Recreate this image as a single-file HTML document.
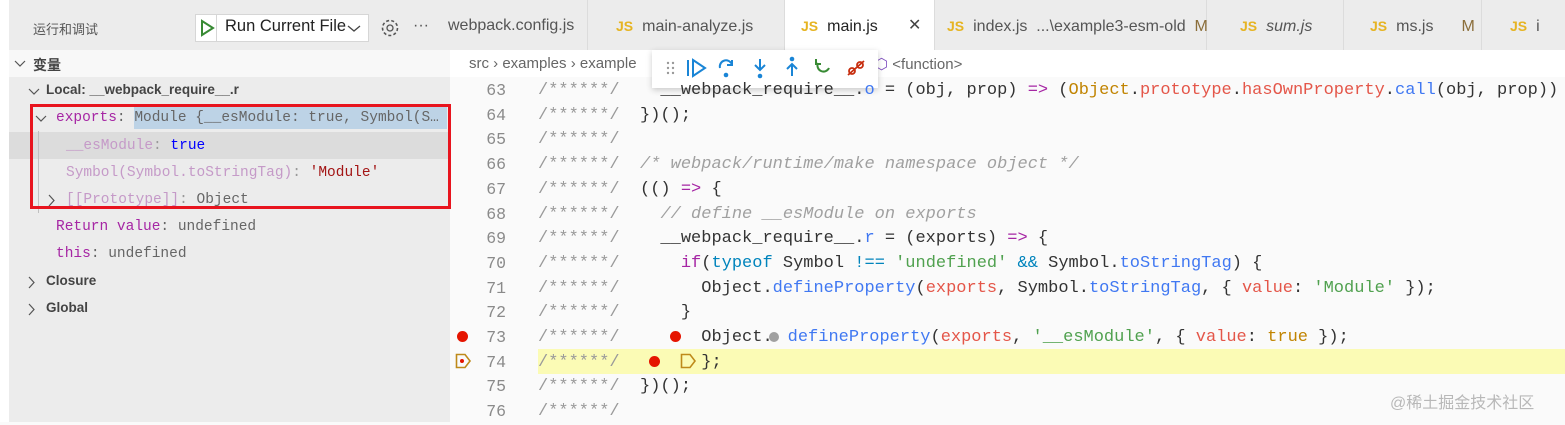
<!DOCTYPE html>
<html><head><meta charset="utf-8"><style>
*{margin:0;padding:0;box-sizing:border-box}
body{width:1565px;height:422px;overflow:hidden;background:#fafafa;position:relative;font-family:"Segoe UI","Liberation Sans","Noto Sans CJK SC",sans-serif;}
.abs{position:absolute}
.mono{font-family:"Liberation Mono","DejaVu Sans Mono",monospace;white-space:pre}
#left{left:9px;top:0;width:441px;height:422px;background:#ececec}
#strip{left:0;top:0;width:9px;height:422px;background:#fff}
.tabs{left:447px;top:0;width:1118px;height:50px;background:#ececec;overflow:hidden}
.tab{position:absolute;top:0;height:50px;border-right:1px solid #dcdcdc;font-size:16px;color:#555;line-height:52px;white-space:nowrap}
.js{color:#e6b422;font-weight:bold;font-size:14px;margin-right:9px}
.ln{position:absolute;left:450px;width:56px;text-align:right;color:#8a8a8a;font-family:"Liberation Mono",monospace;font-size:16.5px}
.cl{position:absolute;left:538px;font-size:17px;color:#333}
.c{color:#9a9a9a}.cm{color:#a0a0a0;font-style:italic}.p{color:#a626a4}.b{color:#4078f2}.r{color:#e45649}.o{color:#c18401}.g{color:#50a14f}.k{color:#0184bc}
.dot{position:absolute;width:11px;height:11px;border-radius:50%;background:#e51400}
</style></head><body>
<div id="strip" class="abs"></div>
<div id="left" class="abs"></div>
<div class="abs" style="left:9px;top:50px;width:441px;height:27px;background:#f8f8f8"></div>
<div class="abs" style="left:33px;top:19px;font-size:13px;color:#555">运行和调试</div>
<div class="abs" style="left:195px;top:14px;width:174px;height:28px;background:#fff;border:1px solid #d6d6d6"></div>
<div class="abs" style="left:216px;top:14px;width:1px;height:28px;background:#d6d6d6"></div>
<svg class="abs" style="left:199px;top:19px" width="16" height="18"><path d="M3 2 L14 9 L3 16 Z" fill="none" stroke="#388a34" stroke-width="2"/></svg>
<div class="abs" style="left:225px;top:17px;font-size:16.5px;color:#222">Run Current File</div>
<svg class="abs" style="left:347px;top:24px" width="14" height="9"><path d="M1 2 L7 7 L13 2" fill="none" stroke="#444" stroke-width="1.3"/></svg>
<svg class="abs" style="left:379px;top:17px" width="22" height="22"><circle cx="11" cy="11" r="3" fill="none" stroke="#555" stroke-width="1.3"/><circle cx="11" cy="11" r="7.5" fill="none" stroke="#555" stroke-width="1.6" stroke-dasharray="3 2.2"/></svg>
<div class="abs" style="left:413px;top:17px;font-size:16px;color:#555">···</div>

<div class="tabs abs">
<div class="tab" style="left:-48px;width:189px;padding-left:49px">webpack.config.js</div>
<div class="tab" style="left:141px;width:197px;padding-left:28px"><span class="js">JS</span>main-analyze.js</div>
<div class="tab" style="left:338px;width:150px;padding-left:16px;background:#fff;color:#222"><span class="js">JS</span>main.js<span style="position:absolute;left:123px;color:#444">✕</span></div>
<div class="tab" style="left:488px;width:272px;padding-left:12px"><span class="js">JS</span>index.js&nbsp; ...\example3-esm-old&nbsp; <span style="color:#8b6e3a">M</span></div>
<div class="tab" style="left:760px;width:137px;padding-left:33px"><span class="js">JS</span><i>sum.js</i></div>
<div class="tab" style="left:897px;width:138px;padding-left:26px"><span class="js">JS</span>ms.js<span style="color:#8b6e3a;margin-left:28px">M</span></div>
<div class="tab" style="left:1035px;width:100px;padding-left:28px;border:none"><span class="js">JS</span>i</div>
</div>

<!-- breadcrumb -->
<div class="abs" style="left:450px;top:50px;width:1115px;height:27px;background:#fff"></div>
<div class="abs" style="left:469px;top:55px;font-size:15px;color:#666">src › examples › example</div>
<div class="abs" style="left:875px;top:55px;font-size:15px;color:#666"><span style="color:#7f4fbf">⬡</span> &lt;function&gt;</div>
<div class="abs" style="left:652px;top:50px;width:226px;height:38px;background:#fff;box-shadow:0 2px 6px rgba(0,0,0,.2)"></div>
<svg class="abs" style="left:652px;top:50px" width="226" height="38">
<g fill="#999"><circle cx="16" cy="13" r="1.2"/><circle cx="21" cy="13" r="1.2"/><circle cx="16" cy="18" r="1.2"/><circle cx="21" cy="18" r="1.2"/><circle cx="16" cy="23" r="1.2"/><circle cx="21" cy="23" r="1.2"/></g>
<g stroke="#1a85d6" stroke-width="2" fill="none"><path d="M36 10 V26"/><path d="M41 10 L53 18 L41 26 Z"/>
<path d="M68 18 A6 6 0 0 1 80 15"/><path d="M80 10 V15 H75"/>
<path d="M108 9 V20 M103 15 L108 20 L113 15"/>
<path d="M140 26 V15 M135 19 L140 14 L145 19"/></g>
<g fill="#1a85d6"><circle cx="74" cy="25" r="2.3"/><circle cx="108" cy="26" r="2.3"/><circle cx="140" cy="9" r="2.3"/></g>
<path d="M166 13 A6 6 0 1 0 177 18" stroke="#388a34" stroke-width="2" fill="none"/><path d="M164 9 V14 H169" stroke="#388a34" stroke-width="2" fill="none"/>
<g stroke="#c72e0f" stroke-width="1.8" fill="none"><path d="M196 25 L212 11"/><circle cx="200" cy="21" r="3"/><circle cx="208" cy="15" r="3"/></g>
</svg>

<!-- left panel -->
<svg class="abs" style="left:14px;top:59px" width="12" height="10"><path d="M1 2 L6 7 L11 2" fill="none" stroke="#555" stroke-width="1.2"/></svg>
<div class="abs" style="left:33px;top:55px;font-size:14px;font-weight:bold;color:#444">变量</div>
<svg class="abs" style="left:28px;top:87px" width="12" height="10"><path d="M1 2 L6 7 L11 2" fill="none" stroke="#555" stroke-width="1.2"/></svg>
<div class="abs" style="left:46px;top:82px;font-size:13.5px;font-weight:bold;color:#444">Local: __webpack_require__.r</div>
<div class="abs" style="left:9px;top:132px;width:441px;height:27px;background:#dcdcdc"></div>
<div class="abs" style="left:134px;top:107px;width:313px;height:22px;background:#bdd3e6"></div>
<div class="abs" style="left:38px;top:131px;width:1px;height:82px;background:#c0c0c0"></div>
<svg class="abs" style="left:35px;top:114px" width="12" height="10"><path d="M1 2 L6 7 L11 2" fill="none" stroke="#555" stroke-width="1.2"/></svg>
<div class="abs mono" style="left:56px;top:110px;font-size:14.5px"><span class="p">exports</span><span style="color:#666">: Module {__esModule: true, Symbol(S…</span></div>
<div class="abs mono" style="left:66px;top:138px;font-size:14.5px"><span style="color:#c59ac8">__esModule</span><span style="color:#999">: </span><span style="color:#0000ff">true</span></div>
<div class="abs mono" style="left:66px;top:165px;font-size:14.5px"><span style="color:#c59ac8">Symbol(Symbol.toStringTag)</span><span style="color:#999">: </span><span style="color:#a31515">'Module'</span></div>
<svg class="abs" style="left:47px;top:194px" width="10" height="13"><path d="M2 1 L7 6.5 L2 12" fill="none" stroke="#555" stroke-width="1.2"/></svg>
<div class="abs mono" style="left:66px;top:192px;font-size:14.5px"><span style="color:#c59ac8">[[Prototype]]</span><span style="color:#999">: </span><span style="color:#666">Object</span></div>
<div class="abs" style="left:30px;top:104px;width:421px;height:105px;border:3px solid #e8141e"></div>
<div class="abs mono" style="left:56px;top:219px;font-size:14.5px"><span class="p">Return value</span><span style="color:#666">: undefined</span></div>
<div class="abs mono" style="left:56px;top:246px;font-size:14.5px"><span class="p">this</span><span style="color:#666">: undefined</span></div>
<svg class="abs" style="left:27px;top:276px" width="10" height="13"><path d="M2 1 L7 6.5 L2 12" fill="none" stroke="#555" stroke-width="1.2"/></svg>
<div class="abs" style="left:46px;top:273px;font-size:13.5px;font-weight:bold;color:#444">Closure</div>
<svg class="abs" style="left:27px;top:303px" width="10" height="13"><path d="M2 1 L7 6.5 L2 12" fill="none" stroke="#555" stroke-width="1.2"/></svg>
<div class="abs" style="left:46px;top:300px;font-size:13.5px;font-weight:bold;color:#444">Global</div>

<!-- code -->
<div class="abs" style="left:538px;top:349px;width:1027px;height:25px;background:#fbfbb5"></div>
<div class="abs mono" style="left:0;top:2px;line-height:24.7px">
<div class="ln" style="top:77px">63</div><div class="cl mono" style="top:77px"><span class="c">/******/</span>    __webpack_require__.<span class="b">o</span> = (obj, prop) <span class="p">=&gt;</span> (<span class="o">Object</span>.<span class="r">prototype</span>.<span class="r">hasOwnProperty</span>.<span class="b">call</span>(obj, prop))</div>
<div class="ln" style="top:101.7px">64</div><div class="cl mono" style="top:101.7px"><span class="c">/******/</span>  })();</div>
<div class="ln" style="top:126.4px">65</div><div class="cl mono" style="top:126.4px"><span class="c">/******/</span></div>
<div class="ln" style="top:151.1px">66</div><div class="cl mono" style="top:151.1px"><span class="c">/******/</span>  <span class="cm">/* webpack/runtime/make namespace object */</span></div>
<div class="ln" style="top:175.8px">67</div><div class="cl mono" style="top:175.8px"><span class="c">/******/</span>  (() <span class="p">=&gt;</span> {</div>
<div class="ln" style="top:200.5px">68</div><div class="cl mono" style="top:200.5px"><span class="c">/******/</span>    <span class="cm">// define __esModule on exports</span></div>
<div class="ln" style="top:225.2px">69</div><div class="cl mono" style="top:225.2px"><span class="c">/******/</span>    __webpack_require__.<span class="b">r</span> = (exports) <span class="p">=&gt;</span> {</div>
<div class="ln" style="top:249.9px">70</div><div class="cl mono" style="top:249.9px"><span class="c">/******/</span>      <span class="p">if</span>(<span class="k">typeof</span> Symbol <span class="k">!==</span> <span class="g">'undefined'</span> <span class="k">&amp;&amp;</span> Symbol.<span class="b">toStringTag</span>) {</div>
<div class="ln" style="top:274.6px">71</div><div class="cl mono" style="top:274.6px"><span class="c">/******/</span>        Object.<span class="b">defineProperty</span>(<span class="r">exports</span>, Symbol.<span class="b">toStringTag</span>, { <span class="r">value</span>: <span class="g">'Module'</span> });</div>
<div class="ln" style="top:299.3px">72</div><div class="cl mono" style="top:299.3px"><span class="c">/******/</span>      }</div>
<div class="ln" style="top:324px">73</div><div class="cl mono" style="top:324px"><span class="c">/******/</span>        Object.<span style="display:inline-block;width:15px"></span><span class="b">defineProperty</span>(<span class="r">exports</span>, <span class="g">'__esModule'</span>, { <span class="r">value</span>: <span class="o">true</span> });</div>
<div class="ln" style="top:348.7px">74</div><div class="cl mono" style="top:348.7px"><span class="c">/******/</span>        };</div>
<div class="ln" style="top:373.4px">75</div><div class="cl mono" style="top:373.4px"><span class="c">/******/</span>  })();</div>
<div class="ln" style="top:398.1px">76</div><div class="cl mono" style="top:398.1px"><span class="c">/******/</span></div>
</div>
<div class="dot" style="left:457px;top:331px"></div>
<div class="dot" style="left:670px;top:331px"></div>
<div class="abs" style="left:769px;top:332px;width:10px;height:10px;border-radius:50%;background:#a0a0a0"></div>
<div class="dot" style="left:649px;top:356px"></div>
<svg class="abs" style="left:455px;top:353px" width="17" height="16"><path d="M1.5 1.5 H10 L15 8 L10 14.5 H1.5 Z" fill="none" stroke="#be8a1a" stroke-width="1.6"/><circle cx="7" cy="8" r="2" fill="#e51400"/></svg>
<svg class="abs" style="left:680px;top:353px" width="17" height="16"><path d="M1.5 1.5 H10 L15 8 L10 14.5 H1.5 Z" fill="none" stroke="#be8a1a" stroke-width="1.6"/></svg>
<div class="abs" style="left:1390px;top:389px;font-size:16px;color:#b8b8b8">@稀土掘金技术社区</div>
</body></html>
